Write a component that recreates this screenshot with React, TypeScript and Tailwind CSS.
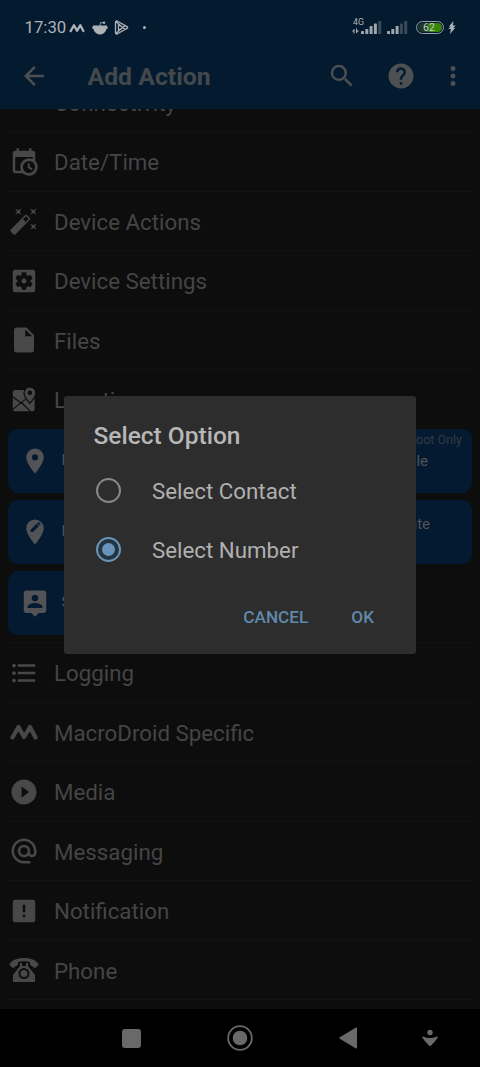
import type { ReactNode } from "react";
import {
  MdArrowBack,
  MdSearch,
  MdHelp,
  MdMoreVert,
  MdSettingsApplications,
  MdFormatListBulleted,
  MdPlayCircleFilled,
  MdAlternateEmail,
} from "react-icons/md";

function Icon({ d, className = "size-[30px]" }: { d: string; className?: string }) {
  return (
    <svg viewBox="0 0 24 24" className={className} fill="currentColor" fillRule="evenodd">
      <path d={d} />
    </svg>
  );
}

const calendarClock =
  "M15,13H16.5V15.82L18.94,17.23L18.19,18.53L15,16.69V13M19,8H5V19H9.67C9.24,18.09 9,17.07 9,16A7,7 0 0,1 16,9C17.07,9 18.09,9.24 19,9.67V8M5,21C3.89,21 3,20.1 3,19V5C3,3.89 3.89,3 5,3H6V1H8V3H16V1H18V3H19A2,2 0 0,1 21,5V11.1C22.24,12.36 23,14.09 23,16A7,7 0 0,1 16,23C14.09,23 12.36,22.24 11.1,21H5M16,11.15A4.85,4.85 0 0,0 11.15,16C11.15,18.68 13.32,20.85 16,20.85A4.85,4.85 0 0,0 20.85,16C20.85,13.32 18.68,11.15 16,11.15Z";
const wand =
  "M7.5,5.6L5,7L6.4,4.5L5,2L7.5,3.4L10,2L8.6,4.5L10,7L7.5,5.6M19.5,15.4L22,14L20.6,16.5L22,19L19.5,17.6L17,19L18.4,16.5L17,14L19.5,15.4M22,2L20.6,4.5L22,7L19.5,5.6L17,7L18.4,4.5L17,2L19.5,3.4L22,2M13.34,12.78L15.78,10.34L13.66,8.22L11.22,10.66L13.34,12.78M14.37,7.29L16.71,9.63C17.1,10 17.1,10.65 16.71,11.04L5.04,22.71C4.65,23.1 4,23.1 3.63,22.71L1.29,20.37C0.9,20 0.9,19.35 1.29,18.96L12.96,7.29C13.35,6.9 14,6.9 14.37,7.29Z";
const fileShape = "M13 9V3.5L18.5 9M6 2C4.89 2 4 2.89 4 4V20A2 2 0 0 0 6 22H18A2 2 0 0 0 20 20V8L14 2H6Z";
const pin =
  "M12,11.5A2.5,2.5 0 0,1 9.5,9A2.5,2.5 0 0,1 12,6.5A2.5,2.5 0 0,1 14.5,9A2.5,2.5 0 0,1 12,11.5M12,2A7,7 0 0,0 5,9C5,14.25 12,22 12,22C12,22 19,14.25 19,9A7,7 0 0,0 12,2Z";
const pinEdit =
  "M12,2A7,7 0 0,0 5,9C5,14.25 12,22 12,22C12,22 19,14.25 19,9A7,7 0 0,0 12,2M10.4,12H8.5V10.1L13.2,5.4L15.1,7.3L10.4,12M15.6,6.8L13.7,4.9L14.5,4.1C14.7,3.9 15,3.9 15.2,4.1L16.4,5.3C16.6,5.5 16.6,5.8 16.4,6L15.6,6.8Z";
const personPin =
  "M19 2H5c-1.11 0-2 .9-2 2v14c0 1.1.89 2 2 2h4l3 3 3-3h4c1.1 0 2-.9 2-2V4c0-1.1-.9-2-2-2zm-7 3.3c1.49 0 2.7 1.21 2.7 2.7 0 1.49-1.21 2.7-2.7 2.7-1.49 0-2.7-1.21-2.7-2.7 0-1.49 1.21-2.7 2.7-2.7zM18 16H6v-.9c0-2 4-3.1 6-3.1s6 1.1 6 3.1v.9z";
const alertBox =
  "M5,3H19A2,2 0 0,1 21,5V19A2,2 0 0,1 19,21H5A2,2 0 0,1 3,19V5A2,2 0 0,1 5,3M11,7V13H13V7H11M11,15V17H13V15H11Z";

function MapPin() {
  return (
    <svg viewBox="0 0 24 24" className="size-[30px]">
      <rect x="3" y="4" width="17.5" height="17" rx="2" fill="currentColor" />
      <path d="M2.5 9 10.5 15 M3 19.500 13 11.500 M10 14 17.500 21.5" fill="none" stroke="#0d0d0d" strokeWidth="1" />
      <path
        d="M16.7 1.5a4.7 4.7 0 0 0-4.7 4.7c0 3.4 4.7 8.4 4.7 8.4s4.7-5 4.7-8.4a4.7 4.7 0 0 0-4.7-4.7Z"
        fill="currentColor"
        stroke="#0d0d0d"
        strokeWidth="1"
      />
      <circle cx="16.7" cy="6.2" r="1.8" fill="#0d0d0d" />
    </svg>
  );
}

function Zigzag({ className }: { className: string }) {
  return (
    <svg viewBox="0 0 28 18" className={className} fill="none" stroke="currentColor" strokeLinejoin="round" strokeLinecap="round">
      <path d="M2.5 14.5 L8.5 4 L14 14 L20 4 L25.5 14.5" strokeWidth="4.2" />
    </svg>
  );
}

function OldPhone() {
  return (
    <svg viewBox="0 0 30 26" className="h-[26px] w-[30px]" fill="currentColor">
      <path d="M15 1C9 1 3.8 2.6 .8 6.6c-.5.7-.4 1.3.1 1.8l2.4 2.1c.5.5 1.1.5 1.7.1l3.6-2.5c.5-.4.6-.9.5-1.5L9 5.1c3.5-1.2 8.5-1.2 12 0l-.1 1.5c-.1.6 0 1.1.5 1.5l3.6 2.5c.6.4 1.2.4 1.7-.1l2.4-2.1c.5-.5.6-1.1.1-1.8C26.2 2.6 21 1 15 1Z" />
      <path
        fillRule="evenodd"
        d="M11 6v3L4 18v7h22v-7l-7-9v-3h-2v3h-4v-3Zm4 5a5.5 5.5 0 1 1 0 11 5.5 5.5 0 0 1 0-11Zm0 2a3.5 3.5 0 1 0 0 7 3.5 3.5 0 0 0 0-7Z"
      />
    </svg>
  );
}

function Row({ icon, label }: { icon: ReactNode; label: string }) {
  return (
    <div className="mx-2 flex h-[59.5px] shrink-0 items-center border-t border-[#121212] text-[#484848]">
      <div className="flex w-8 shrink-0 items-center justify-center pt-px">{icon}</div>
      <span className="ml-[14px] pt-[1.5px] text-[22.3px] leading-7 text-[#454545]">{label}</span>
    </div>
  );
}

function Card({ icon, label, note, align }: { icon?: ReactNode; label: string; note?: string; align?: string }) {
  return (
    <div className="relative flex h-16 flex-1 items-center rounded-[10px] bg-[#041a31] text-[#515357]">
      <div className="flex w-[53.5px] justify-center">{icon}</div>
      <span className={`flex-1 text-[15px] ${align ?? ""}`}>{label}</span>
      {note && <span className="absolute top-[2px] right-[10px] text-[12.5px] text-[#303b46]">{note}</span>}
    </div>
  );
}

function Signal({ dim }: { dim: number }) {
  return (
    <svg viewBox="0 0 21 13" className="h-[13px] w-[21px]" fill="#9da5ad">
      {[3, 5, 8, 10.5, 13].map((h, i) => (
        <rect key={h} x={i * 4.3} y={13 - h} width="3" height={h} rx=".6" opacity={i >= dim ? 0.35 : 1} />
      ))}
    </svg>
  );
}

function StatusBar() {
  return (
    <div className="flex h-[54px] items-center pt-px pr-[24px] pl-[24.5px] text-[#adb2b7]">
      <span className="w-[42px] text-[16.8px]">17:30</span>
      <Zigzag className="ml-[2px] h-[10px] w-[16px]" />
      <svg viewBox="0 0 16 14" className="ml-[7px] h-[14px] w-[16px]" fill="currentColor">
        <path d="M1.5 4.5h13c.4 0 .6.3.5.8C14.5 10 12.5 13.5 8 13.5S1.5 10 1 5.300c-.1-.5.1-.8.5-.8Z" />
        <ellipse cx="1.8" cy="6.5" rx="1.6" ry="1.5" />
        <ellipse cx="14.2" cy="6.5" rx="1.6" ry="1.5" />
        <path d="M8 5 8.500 1.500 11 1.800" fill="none" stroke="currentColor" strokeWidth=".8" />
        <circle cx="12" cy="1.7" r="1.2" />
      </svg>
      <svg viewBox="0 0 15 15" className="ml-[6px] size-[15px]" fill="none" stroke="currentColor" strokeWidth="1.3" strokeLinejoin="round">
        <path d="M1.5 2.2C1.5 1 2.5.7 3.5 1.2L13 6.6c.9.5.9 1.3 0 1.8l-9.5 5.4c-1 .5-2 .2-2-1ZM1.8 1.5 11 9.5M1.8 13.5 11 5.5M4.5 4.5v6L9 7.5Z" />
      </svg>
      <span className="ml-[14px] size-[3px] rounded-full bg-[#adb2b7]" />
      <div className="ml-auto flex items-center">
        <div className="relative flex h-4 w-[30px] items-end justify-end pb-[2px]">
          <span className="absolute -top-[3px] left-[1px] text-[8.8px] leading-[11px]">4G</span>
          <svg viewBox="0 0 7 6" className="absolute bottom-[2px] left-0 h-[6px] w-[7px]" fill="currentColor">
            <path d="M0 3.500 2.500.5v5H1.500V3.500ZM4 5.500v-5h1v2h2Z" />
          </svg>
          <Signal dim={4} />
        </div>
        <div className="ml-[5px] flex h-4 items-end pb-[2px]">
          <Signal dim={3} />
        </div>
        <div className="relative ml-[8px] flex h-[13px] w-[28px] rounded-full border-[1.5px] border-[#979da3] p-[1px]">
          <div className="h-full w-full rounded-full bg-linear-to-r from-[#1d3828] from-30% to-[#38850c] to-50%" />
          <span className="absolute inset-0 flex items-center pl-[6px] text-[10.5px] leading-[12px] text-[#c3cbc3]">62</span>
        </div>
        <svg viewBox="0 0 8 14" className="ml-[4px] h-[13px] w-[8px]" fill="currentColor">
          <path d="M5.5 0 .6 6.200h2L0 8.500h2.700L2 14l5.400-6.700H5.300L8 4.800H5Z" />
        </svg>
      </div>
    </div>
  );
}

function AppBar() {
  return (
    <div className="flex h-[55px] items-start pt-[7px] text-[#4d5052]">
      <MdArrowBack className="ml-[19px] size-[30px]" />
      <h1 className="ml-[38.5px] text-[24.8px] leading-[32px] font-bold text-[#43484d]">Add Action</h1>
      <MdSearch className="ml-auto size-[30px]" />
      <MdHelp className="ml-[29px] size-[30px]" />
      <MdMoreVert className="mr-[12px] ml-[22px] size-[30px]" />
    </div>
  );
}

function Option({ label, checked }: { label: string; checked?: boolean }) {
  return (
    <div className="flex h-[58.5px] items-center">
      <span
        className={
          checked
            ? "mt-px flex size-[25px] items-center justify-center rounded-full border-[2.5px] border-[#6894b9] bg-[#243440]"
            : "size-[25px] rounded-full border-[2.5px] border-[#888888]"
        }
      >
        {checked && <span className="size-[13px] rounded-full bg-[#6894b9]" />}
      </span>
      <span className="ml-[31.5px] pt-[1.5px] text-[22.3px] leading-7 text-[#b0b0b0]">{label}</span>
    </div>
  );
}

function Dialog() {
  return (
    <div className="absolute top-[396px] left-16 flex h-[258px] w-[352px] flex-col rounded-[3px] bg-[#2d2d2d]">
      <h2 className="mt-6 pl-[29.5px] text-[24.5px] leading-8 font-medium text-[#b7b7b7]">Select Option</h2>
      <div className="mt-[9px] pl-[31.5px]">
        <Option label="Select Contact" />
        <Option label="Select Number" checked />
      </div>
      <div className="mt-[27px] flex justify-end gap-[43px] pr-[42px] text-[17.2px] leading-6 font-medium text-[#6088ab]">
        <button>CANCEL</button>
        <button>OK</button>
      </div>
    </div>
  );
}

export default function App() {
  return (
    <div className="relative flex h-[1067px] w-[480px] flex-col overflow-hidden bg-[#0d0d0d] font-[Roboto,sans-serif]">
      <header className="h-[109px] shrink-0 bg-[#041a2f]">
        <StatusBar />
        <AppBar />
      </header>
      <main className="flex h-[900px] flex-col overflow-hidden">
        <div className="-mt-[37.5px] flex flex-col">
          <Row icon={null} label="Connectivity" />
          <Row icon={<Icon d={calendarClock} />} label="Date/Time" />
          <Row icon={<Icon d={wand} />} label="Device Actions" />
          <Row icon={<MdSettingsApplications className="size-[30px]" />} label="Device Settings" />
          <Row icon={<Icon d={fileShape} />} label="Files" />
          <Row icon={<MapPin />} label="Location" />
          <div className="flex flex-col gap-[7px] px-2 pb-[7.5px]">
            <div className="flex gap-2">
              <Card icon={<Icon d={pin} />} label="Force Location" />
              <Card label="Enable/Disable" note="Root Only" align="pt-[2px] text-right pr-[44px]" />
            </div>
            <div className="flex gap-2">
              <Card icon={<Icon d={pinEdit} />} label="Location Mode" />
              <Card label="Set Update Rate" align="mb-[15px] text-right pr-[42px]" />
            </div>
            <div className="flex gap-2">
              <Card icon={<Icon d={personPin} />} label="Share Location" />
              <div className="flex-1" />
            </div>
          </div>
          <Row icon={<MdFormatListBulleted className="size-[30px]" />} label="Logging" />
          <Row icon={<Zigzag className="h-[18px] w-[28px]" />} label="MacroDroid Specific" />
          <Row icon={<MdPlayCircleFilled className="size-[30px]" />} label="Media" />
          <Row icon={<MdAlternateEmail className="size-[30px]" />} label="Messaging" />
          <Row icon={<Icon d={alertBox} />} label="Notification" />
          <Row icon={<OldPhone />} label="Phone" />
          <div className="mx-2 h-5 border-t border-[#121212]" />
        </div>
      </main>
      <nav className="flex h-[58px] shrink-0 items-center bg-black text-[#696969]">
        <span className="ml-[122px] size-[19px] rounded-[3px] bg-[#696969]" />
        <svg viewBox="0 0 26 26" className="ml-[86px] size-[26px]">
          <circle cx="13" cy="13" r="11.8" fill="none" stroke="currentColor" strokeWidth="1.8" />
          <circle cx="13" cy="13" r="7.3" fill="currentColor" />
        </svg>
        <svg viewBox="0 0 18 22" className="ml-[86px] h-[22px] w-[18px]" fill="currentColor">
          <path d="M.8 10.2 17 .5q1-.4 1 .7v19.6q0 1.1-1 .7L.8 11.8q-1.2-.8 0-1.6Z" />
        </svg>
        <svg viewBox="0 0 16 18" className="ml-[65px] h-[18px] w-[16px]" fill="currentColor">
          <circle cx="8" cy="3.5" r="2.7" />
          <path d="M1 7.500Q8 10.500 15 7.500q1.200 0 .6 1.300Q13 13 8.800 16.700q-.8.700-1.600 0Q3 13 .4 8.800-.2 7.500 1 7.500Z" />
        </svg>
      </nav>
      <Dialog />
    </div>
  );
}
